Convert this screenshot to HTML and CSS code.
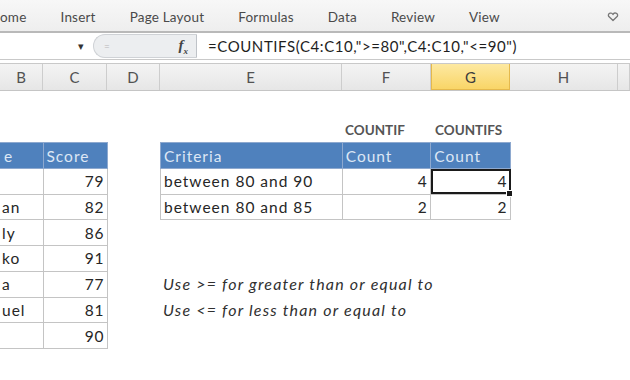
FILE: index.html
```html
<!DOCTYPE html>
<html lang="en">
<head>
  <meta charset="UTF-8" />
  <title>COUNTIFS between two values</title>
  <link rel="stylesheet" href="styles.css">
</head>
<body>
  <div class="ribbon">
    <span class="tab">ome</span>
    <span class="tab">Insert</span>
    <span class="tab">Page Layout</span>
    <span class="tab">Formulas</span>
    <span class="tab">Data</span>
    <span class="tab">Review</span>
    <span class="tab">View</span>
    <svg class="help" width="12" height="10" viewBox="0 0 12 10">
      <path d="M6 8.5 L1.6 4.2 A2.2 2.2 0 0 1 6 2.6 A2.2 2.2 0 0 1 10.4 4.2 Z" fill="none" stroke="#777" stroke-width="1.3" stroke-linejoin="round"/>
    </svg>
  </div>

  <div class="formula-bar">
    <div class="name-box"><span class="arrow">&#9662;</span></div>
    <div class="fx-box">
      <span class="cancel">=</span>
      <span class="fx">f<sub>x</sub></span>
    </div>
    <div class="formula">=COUNTIFS(C4:C10,"&gt;=80",C4:C10,"&lt;=90")</div>
  </div>

  <div class="col-heads">
    <div class="head">B</div>
    <div class="head">C</div>
    <div class="head">D</div>
    <div class="head">E</div>
    <div class="head">F</div>
    <div class="head active">G</div>
    <div class="head">H</div>
    <div class="head"></div>
  </div>

  <div class="sheet">
    <div class="label lbl-f">COUNTIF</div>
    <div class="label lbl-g">COUNTIFS</div>

    <table class="tbl scores">
      <tr><th class="name">e</th><th>Score</th></tr>
      <tr><td class="name"></td><td class="num">79</td></tr>
      <tr><td class="name">an</td><td class="num">82</td></tr>
      <tr><td class="name">ly</td><td class="num">86</td></tr>
      <tr><td class="name">ko</td><td class="num">91</td></tr>
      <tr><td class="name">a</td><td class="num">77</td></tr>
      <tr><td class="name">uel</td><td class="num">81</td></tr>
      <tr><td class="name"></td><td class="num">90</td></tr>
    </table>

    <table class="tbl criteria">
      <tr><th class="c-e">Criteria</th><th class="c-f">Count</th><th class="c-g">Count</th></tr>
      <tr><td>between 80 and 90</td><td class="num">4</td><td class="num selected">4<span class="handle"></span></td></tr>
      <tr><td>between 80 and 85</td><td class="num">2</td><td class="num">2</td></tr>
    </table>

    <div class="note note-1">Use &gt;= for greater than or equal to</div>
    <div class="note note-2">Use &lt;= for less than or equal to</div>
  </div>
</body>
</html>
```

FILE: styles.css
```css
body {
  margin: 0;
  width: 630px;
  height: 380px;
  overflow: hidden;
  font-family: Lato, "Open Sans", sans-serif;
  background: white;
  color: #262626;
}

/* ribbon tabs */
.ribbon {
  height: 33px;
  box-sizing: border-box;
  display: flex;
  align-items: center;
  gap: 34px;
  padding-top: 3px;
  background: linear-gradient(#f7f7f7, #eeeeee);
  border-bottom: 2px solid #b9b9b9;
}
.tab {
  font-size: 13.5px;
  color: #4a4a4a;
  letter-spacing: 0.2px;
}
.help {
  margin-left: auto;
  margin-right: 11px;
}

/* formula bar */
.formula-bar {
  height: 27px;
  box-sizing: border-box;
  display: flex;
  background: white;
  border-bottom: 1px solid #c9c9c9;
}
.name-box {
  width: 93px;
  display: flex;
  align-items: center;
  justify-content: flex-end;
  padding-right: 9px;
  box-sizing: border-box;
}
.arrow {
  font-size: 11px;
  color: #333;
}
.fx-box {
  width: 104px;
  display: flex;
  align-items: center;
  justify-content: space-between;
  padding: 0 8px 0 10px;
  box-sizing: border-box;
  background: #eceef0;
  border: 1px solid #cfd2d6;
  border-right-color: #bfc3c8;
  border-radius: 13px 0 0 13px;
  margin: 1px 0;
}
.cancel {
  font-size: 10px;
  color: #b8b8b8;
}
.fx {
  font-family: "Liberation Serif", serif;
  font-style: italic;
  font-weight: bold;
  font-size: 15px;
  color: #444;
}
.fx sub {
  font-size: 9px;
}
.formula {
  flex: 1;
  padding-left: 11px;
  font-size: 15px;
  letter-spacing: 0.58px;
  line-height: 26px;
  color: #1e1e1e;
}

/* column headers */
.col-heads {
  margin-top: 3px;
  height: 28px;
  box-sizing: border-box;
  border-top: 1px solid #c9c9c9;
  border-bottom: 1px solid #c5c5c5;
  display: grid;
  grid-template-columns: 43px 64px 53px 182px 89px 79px 108px 12px;
  background: linear-gradient(#f4f4f4, #e6e6e6);
}
.head {
  display: flex;
  align-items: center;
  justify-content: center;
  font-size: 15px;
  color: #525252;
  border-right: 1px solid #cdcdcd;
}
.head.active {
  background: linear-gradient(#fde9a2, #f9d567);
  border: 1px solid #e5b94c;
  border-top: 0;
  color: #3d3d3d;
}

/* sheet body */
.sheet {
  display: grid;
  grid-template-columns: 43px 64px 53px 182px 89px 79px 108px 12px;
  grid-template-rows: repeat(11, 25.7px);
}
.label {
  grid-row: 2;
  align-self: center;
  font-size: 13.5px;
  font-weight: bold;
  color: #555;
  letter-spacing: 0;
}
.lbl-f { grid-column: 5; padding-left: 3px; }
.lbl-g { grid-column: 6; padding-left: 4px; }

.tbl {
  border-collapse: collapse;
  font-size: 15.5px;
  letter-spacing: 1px;
  align-self: start;
}
.tbl th, .tbl td {
  height: 25.7px;
  box-sizing: border-box;
  padding: 0 3px;
  border: 1px solid #c4c4c4;
  white-space: nowrap;
}
.tbl th {
  background: #4f81bd;
  color: #dde7f5;
  font-weight: normal;
  text-align: left;
  border-color: #8ea9cf;
}
.num { text-align: right; }
.tbl .num { padding-right: 3px; letter-spacing: 0.6px; }

.scores {
  grid-column: 1 / 3;
  grid-row: 3 / 11;
  width: 108px;
}
.scores .name {
  width: 43px;
  border-left: 0;
  padding-left: 2px;
}
.scores th.name { padding-left: 4px; }

.criteria {
  grid-column: 4 / 7;
  grid-row: 3 / 6;
  width: 351px;
}
.c-e { width: 182px; }
.c-f { width: 89px; }
.c-g { width: 80px; }

.selected {
  position: relative;
  outline: 2px solid #1a1a1a;
  outline-offset: -2px;
}
.handle {
  position: absolute;
  right: -3px;
  bottom: -3px;
  width: 5px;
  height: 5px;
  background: #1a1a1a;
  border: 1px solid white;
}

.note {
  grid-column: 4 / 8;
  align-self: center;
  padding-left: 3px;
  font-size: 16px;
  font-style: italic;
  letter-spacing: 1.2px;
  color: #303030;
}
.note-1 { grid-row: 8; }
.note-2 { grid-row: 9; }
```
